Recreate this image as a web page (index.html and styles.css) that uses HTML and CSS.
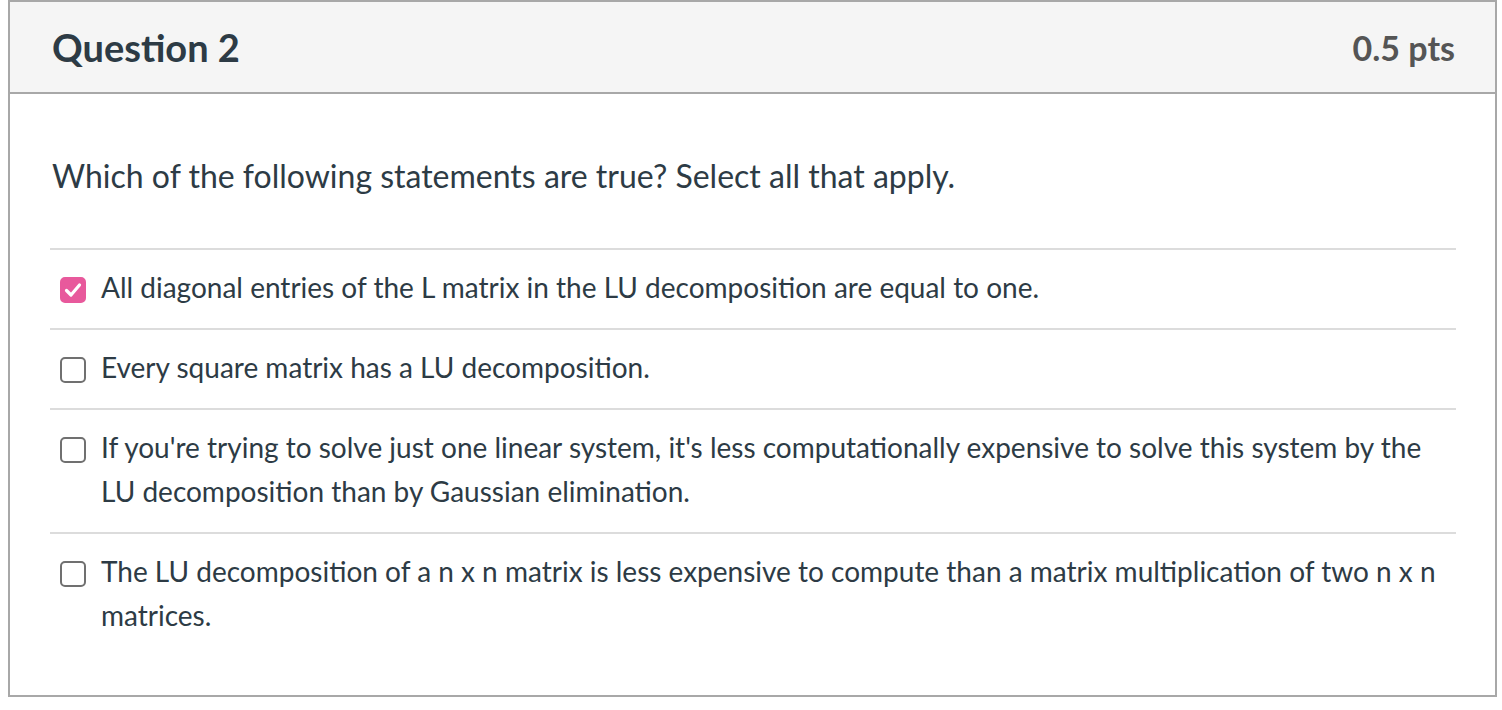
FILE: index.html
```html
<!DOCTYPE html>
<html>
<head>
<meta charset="utf-8">
<link rel="stylesheet" href="styles.css">
</head>
<body>
<div class="card">
  <div class="header">
    <h2 class="title">Question 2</h2>
    <div class="pts">0.5 pts</div>
  </div>
  <div class="content">
    <p class="prompt">Which of the following statements are true? Select all that apply.</p>
    <div class="answers">
      <div class="answer">
        <span class="box checked"><svg viewBox="0 0 26 26" width="26" height="26"><path d="M6.5 13.5 L11 18 L19.5 8" fill="none" stroke="#fff" stroke-width="3.2" stroke-linecap="round" stroke-linejoin="round"/></svg></span>
        <span class="label">All diagonal entries of the L matrix in the LU decomposition are equal to one.</span>
      </div>
      <div class="answer">
        <span class="box"></span>
        <span class="label">Every square matrix has a LU decomposition.</span>
      </div>
      <div class="answer">
        <span class="box"></span>
        <span class="label">If you're trying to solve just one linear system, it's less computationally expensive to solve this system by the LU decomposition than by Gaussian elimination.</span>
      </div>
      <div class="answer">
        <span class="box"></span>
        <span class="label">The LU decomposition of a n x n matrix is less expensive to compute than a matrix multiplication of two n x n matrices.</span>
      </div>
    </div>
  </div>
</div>
</body>
</html>
```
FILE: styles.css
```css
html, body {
  margin: 0;
  padding: 0;
  background: #fff;
}
body {
  padding: 0 5px 0 8px;
  font-family: Lato, "Open Sans", sans-serif;
  color: #2d3b45;
}
.card {
  border: 2px solid #a8a8a8;
  height: 697px;
  box-sizing: border-box;
  display: flex;
  flex-direction: column;
}
.header {
  background: #f5f5f5;
  border-bottom: 2px solid #a8a8a8;
  height: 92px;
  box-sizing: border-box;
  display: flex;
  align-items: center;
  justify-content: space-between;
  padding: 0 40px 0 42px;
}
.title {
  margin: 0;
  font-size: 38px;
  font-weight: 700;
  color: #2d3b45;
}
.pts {
  font-size: 34px;
  font-weight: 700;
  color: #555555;
}
.content {
  padding: 0 39px 0 40px;
}
.prompt {
  margin: 0;
  padding: 60px 0 0 2px;
  height: 154px;
  box-sizing: border-box;
  font-size: 32px;
  line-height: 44px;
}
.answers {
  display: flex;
  flex-direction: column;
}
.answer {
  border-top: 2px solid #dcdcdc;
  padding: 15px 0 19px 10px;
  display: flex;
  align-items: flex-start;
  gap: 15px;
}
.box {
  flex: none;
  width: 26px;
  height: 26px;
  box-sizing: border-box;
  border: 2px solid #707070;
  border-radius: 5px;
  margin-top: 12px;
  display: flex;
}
.box.checked {
  background: #e8599c;
  border-color: #e8599c;
}
.box svg {
  margin: -2px;
}
.label {
  font-size: 28px;
  line-height: 44px;
}
```
